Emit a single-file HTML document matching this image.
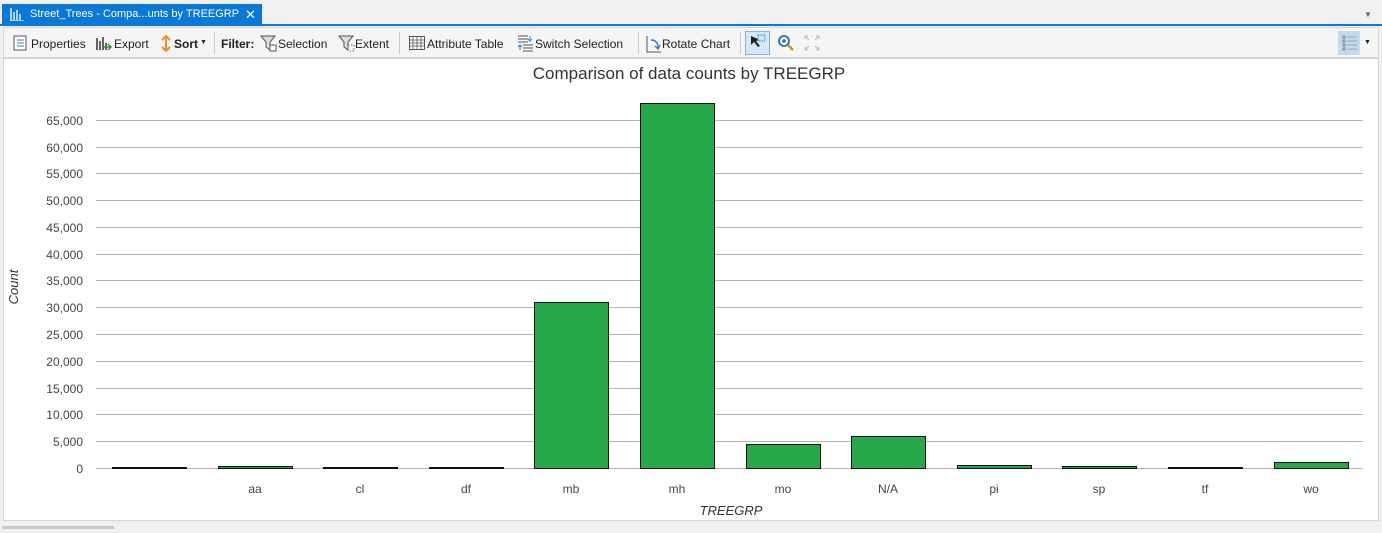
<!DOCTYPE html>
<html><head><meta charset="utf-8"><style>
*{margin:0;padding:0;box-sizing:border-box}
body{width:1382px;height:533px;background:#f0f0f0;font-family:"Liberation Sans",sans-serif;position:relative;overflow:hidden}
.tab{position:absolute;left:2px;top:4px;width:260px;height:21px;background:#0a78d7;color:#fff;font-size:11px;line-height:21px;padding-left:28px;white-space:nowrap}
.strip{position:absolute;left:0;top:24px;width:1382px;height:2px;background:#0a78d7}
.tb{position:absolute;left:3px;top:27px;width:1376px;height:31px;background:#f5f5f5;border:1px solid #d6d6d6;font-size:12px;color:#222;white-space:nowrap}
.tb span{position:absolute;top:9px}
.sep{position:absolute;top:4px;width:1px;height:22px;background:#c8c8c8}
.panel{position:absolute;left:3px;top:58px;width:1376px;height:463px;background:#fff;border:1px solid #d6d6d6}
</style></head><body>
<div class="tab"><svg style="position:absolute;left:8px;top:4px" width="14" height="13"><path d="M1 0v13h13M4 4v8M7 2v10M10 6v6" stroke="#cfe6fa" stroke-width="1.6" fill="none"/></svg>Street_Trees - Compa...unts by TREEGRP<span style="position:absolute;left:243px;top:0;font-size:13px">✕</span></div>
<div style="position:absolute;left:1364px;top:10px;font-size:8px;color:#666">▼</div>
<div class="strip"></div>
<div class="tb">
<svg style="position:absolute;left:9px;top:7px" width="16" height="16"><rect x="1" y="1" width="12" height="14" fill="#fff" stroke="#555"/><path d="M4 5h7M4 8h7M4 11h7" stroke="#3a7bc8"/></svg><span style="left:27px">Properties</span>
<svg style="position:absolute;left:91px;top:7px" width="18" height="17"><path d="M2 15V3M5 15V6M8 15V2M11 15V8" stroke="#333" stroke-width="1.5"/><path d="M9 12h7M13 9l3 3-3 3" stroke="#2f9a3a" stroke-width="1.5" fill="none"/></svg><span style="left:110px">Export</span>
<svg style="position:absolute;left:157px;top:7px" width="10" height="17"><path d="M5 1v15M1 5l4-4 4 4M1 12l4 4 4-4" stroke="#e7912e" stroke-width="2" fill="none"/></svg><span style="left:170px;font-weight:bold">Sort</span><span style="left:196px;font-size:7px;top:11px">▼</span>
<div class="sep" style="left:210px"></div>
<span style="left:217px;font-weight:bold">Filter:</span>
<svg style="position:absolute;left:256px;top:7px" width="18" height="18"><path d="M1 1h14l-5 6v8l-4-3V7z" fill="#ddd" stroke="#555"/><rect x="10" y="10" width="6" height="6" fill="#fff" stroke="#555"/></svg><span style="left:274px">Selection</span>
<svg style="position:absolute;left:334px;top:7px" width="18" height="18"><path d="M1 1h14l-5 6v8l-4-3V7z" fill="#ddd" stroke="#555"/><rect x="10" y="10" width="6" height="6" fill="none" stroke="#3a7bc8" stroke-dasharray="1.5 1.5"/></svg><span style="left:351px">Extent</span>
<div class="sep" style="left:395px"></div>
<svg style="position:absolute;left:405px;top:8px" width="16" height="14"><rect x="0.5" y="0.5" width="15" height="13" fill="#fff" stroke="#555"/><path d="M0 4h16M0 7h16M0 10h16M4 0v14M8 0v14M12 0v14" stroke="#555" stroke-width=".8"/></svg><span style="left:423px">Attribute Table</span>
<svg style="position:absolute;left:513px;top:6px" width="18" height="18"><path d="M1 2h10M1 5h10M1 8h10M6 11h10M6 14h10M6 17h10" stroke="#555"/><path d="M13 2v5M11 5l2 2 2-2M3 16v-5M1 13l2-2 2 2" stroke="#3a7bc8" fill="none"/></svg><span style="left:531px">Switch Selection</span>
<div class="sep" style="left:634px"></div>
<svg style="position:absolute;left:642px;top:7px" width="16" height="18"><path d="M1 1v16h14" stroke="#555" fill="none"/><path d="M5 5q7 0 7 8M9 11l3 3 2-4" stroke="#3a7bc8" stroke-width="1.4" fill="none"/></svg><span style="left:658px">Rotate Chart</span>
<div class="sep" style="left:736px"></div>
<div style="position:absolute;left:741px;top:3px;width:25px;height:24px;background:#d6e8f8;border:1px solid #7fb6e6"></div>
<svg style="position:absolute;left:745px;top:6px" width="18" height="18"><path d="M2 2l9 4-4 1 4 5-2 1-4-5-3 3z" fill="#222"/><rect x="9" y="1" width="7" height="6" fill="#cfe6fa" stroke="#3a7bc8" stroke-dasharray="1.5 1"/></svg>
<svg style="position:absolute;left:773px;top:6px" width="18" height="18"><circle cx="7" cy="7" r="5" fill="#fff" stroke="#1a6fc0" stroke-width="1.8"/><path d="M5 7h4M7 5v4" stroke="#1a6fc0" stroke-width="1.6"/><path d="M11 11l5 5" stroke="#d08a2a" stroke-width="2.4"/></svg>
<svg style="position:absolute;left:799px;top:6px" width="18" height="18"><path d="M2 2l4 4M2 2h3M2 2v3M16 2l-4 4M16 2h-3M16 2v3M2 16l4-4M2 16h3M2 16v-3M16 16l-4-4M16 16h-3M16 16v-3" stroke="#bbb" fill="none"/></svg>
<div style="position:absolute;left:1334px;top:3px;width:22px;height:24px;background:#c3d9ee"></div>
<svg style="position:absolute;left:1338px;top:7px" width="16" height="16"><path d="M5 2h10M5 6h10M5 10h10M5 14h10" stroke="#8aa"/><rect x="1" y="1" width="2" height="2" fill="none" stroke="#889"/><rect x="1" y="5" width="2" height="2" fill="none" stroke="#889"/><rect x="1" y="9" width="2" height="2" fill="none" stroke="#889"/><rect x="1" y="13" width="2" height="2" fill="none" stroke="#889"/></svg>
<span style="left:1360px;font-size:7px;top:11px">▼</span>
</div>
<div class="panel"></div>
<svg style="position:absolute;left:0;top:0" width="1382" height="533" font-family="Liberation Sans, sans-serif">
<text x="689" y="79" font-size="17" fill="#333" text-anchor="middle">Comparison of data counts by TREEGRP</text>
<g stroke="#b4b4b4" stroke-width="1">
<line x1="96" x2="1363" y1="468.5" y2="468.5"/><line x1="96" x2="1363" y1="441.5" y2="441.5"/><line x1="96" x2="1363" y1="414.5" y2="414.5"/><line x1="96" x2="1363" y1="388.5" y2="388.5"/><line x1="96" x2="1363" y1="361.5" y2="361.5"/><line x1="96" x2="1363" y1="334.5" y2="334.5"/><line x1="96" x2="1363" y1="307.5" y2="307.5"/><line x1="96" x2="1363" y1="280.5" y2="280.5"/><line x1="96" x2="1363" y1="254.5" y2="254.5"/><line x1="96" x2="1363" y1="227.5" y2="227.5"/><line x1="96" x2="1363" y1="200.5" y2="200.5"/><line x1="96" x2="1363" y1="173.5" y2="173.5"/><line x1="96" x2="1363" y1="147.5" y2="147.5"/><line x1="96" x2="1363" y1="120.5" y2="120.5"/>
</g>
<g font-size="12" fill="#444" text-anchor="end">
<text x="83" y="473">0</text><text x="83" y="446">5,000</text><text x="83" y="419">10,000</text><text x="83" y="393">15,000</text><text x="83" y="366">20,000</text><text x="83" y="339">25,000</text><text x="83" y="312">30,000</text><text x="83" y="285">35,000</text><text x="83" y="259">40,000</text><text x="83" y="232">45,000</text><text x="83" y="205">50,000</text><text x="83" y="178">55,000</text><text x="83" y="152">60,000</text><text x="83" y="125">65,000</text>
</g>
<text transform="translate(18,287) rotate(-90)" font-size="13" font-style="italic" fill="#333" text-anchor="middle">Count</text>
<g fill="#27a84a" stroke="#111" stroke-width="1">
<rect x="112.5" y="467.5" width="74" height="1"/>
<rect x="218.5" y="466.5" width="74" height="2"/>
<rect x="323.5" y="467.5" width="74" height="1"/>
<rect x="429.5" y="467.5" width="74" height="1"/>
<rect x="534.5" y="302.5" width="74" height="166"/>
<rect x="640.5" y="103.5" width="74" height="365"/>
<rect x="746.5" y="444.5" width="74" height="24"/>
<rect x="851.5" y="436.5" width="74" height="32"/>
<rect x="957.5" y="465.5" width="74" height="3"/>
<rect x="1062.5" y="466.5" width="74" height="2"/>
<rect x="1168.5" y="467.5" width="74" height="1"/>
<rect x="1274.5" y="462.5" width="74" height="6"/>
</g>
<g font-size="12" fill="#444" text-anchor="middle">
<text x="255" y="493">aa</text><text x="360" y="493">cl</text><text x="466" y="493">df</text><text x="571" y="493">mb</text><text x="677" y="493">mh</text><text x="783" y="493">mo</text><text x="888" y="493">N/A</text><text x="994" y="493">pi</text><text x="1099" y="493">sp</text><text x="1205" y="493">tf</text><text x="1311" y="493">wo</text>
</g>
<text x="731" y="515" font-size="13" font-style="italic" fill="#333" text-anchor="middle">TREEGRP</text>
<rect x="2" y="526" width="112" height="3" fill="#c8c8c8"/>
</svg>
</body></html>
